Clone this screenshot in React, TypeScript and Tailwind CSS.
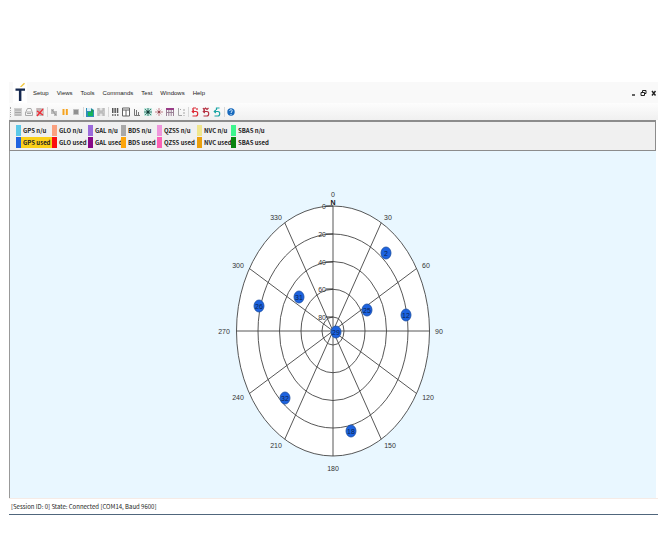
import React from "react";

const uiFont = "font-['Noto_Sans_CJK_SC','Liberation_Sans',sans-serif]";
const plotFont = "font-['Liberation_Sans',sans-serif]";

const menus = ["Setup", "Views", "Tools", "Commands", "Test", "Windows", "Help"];

const legend = [
  { name: "GPS", free: "bg-[#5bc8e8]", used: "bg-[#1f62e0]", width: "w-9", active: true },
  { name: "GLO", free: "bg-[#fba07e]", used: "bg-[#fb0d0d]", width: "w-9" },
  { name: "GAL", free: "bg-[#9b6bdb]", used: "bg-[#880a88]", width: "w-[33px]" },
  { name: "BDS", free: "bg-[#a8a8a8]", used: "bg-[#fda50a]", width: "w-9" },
  { name: "QZSS", free: "bg-[#ee96dc]", used: "bg-[#fb62b4]", width: "w-10" },
  { name: "NVC", free: "bg-[#f0e68c]", used: "bg-[#eaa00c]", width: "w-[34px]" },
  { name: "SBAS", free: "bg-[#3df58c]", used: "bg-[#0a840e]", width: "w-10" },
];

type Tool = { label: string; art: React.ReactNode };

const swirl = (color: string, top: React.ReactNode) => (
  <g fill="none" stroke={color} strokeWidth="1.2">
    {top}
    <path d="M1.5 4.500H5C7.300 4.500 7.300 9 4.800 9H1.500" />
    <path d="M2.800 3L1.300 4.500L2.800 6" />
  </g>
);

const groups: Tool[][] = [
  [
    { label: "Save", art: <g><path d="M0 1h8v8H0z" fill="#cfcfcf" /><path d="M1 3h6M1 5.500h6M1 8h6" stroke="#a5a5a5" /></g> },
    { label: "Open", art: <g fill="none" stroke="#aaa"><path d="M1 4.500L2.500 1.500H6L7 4.500M.5 5h7v3.500h-7zM2 6.500h4" /></g> },
    { label: "Disconnect", art: <g><path d="M0 1h8v8H0z" fill="#d5c4c4" /><path d="M1 2h4M1 4h3M4 8h3" stroke="#aaa" /><path d="M1 9L7 2M1 4l6 4" stroke="#ef2b35" strokeWidth="1.300" /></g> },
  ],
  [
    { label: "Record", art: <g><path d="M1 2h3v5H1zM4 4h3v5H4z" fill="#bcbcbc" /><path d="M2 3l4 5" stroke="#969696" /></g> },
    { label: "Pause", art: <path d="M1.500 2h2v6h-2zM4.800 2h2v6h-2z" fill="#f5a31f" /> },
    { label: "Stop", art: <path d="M1.500 2.500h5v5h-5z" fill="#8f8f8f" stroke="#c0c0c0" /> },
  ],
  [
    { label: "Load configuration", art: <g><path d="M0 1h5l3 2v7H0z" fill="#2f8db8" /><path d="M1 1h4v3H1z" fill="#d9eef7" /><path d="M2 5h5v4H2z" fill="#16b65a" /><path d="M5 2l3 2-3 2z" fill="#1d9b55" /></g> },
    { label: "Store configuration", art: <g><path d="M0 1h8v8H0z" fill="#c8c8c8" /><path d="M2 1v3h4V1M2 9V6h4v3" fill="#e5e5e5" stroke="#b0b0b0" /></g> },
  ],
  [
    { label: "Signal levels", art: <g><path d="M1 1h1.500v5H1zM3.400 1h1.500v5H3.400zM5.800 1h1.500v5H5.800z" fill="#555" /><path d="M1 8h6.500" stroke="#555" strokeWidth="1.500" strokeDasharray="1.500 1" /></g> },
    { label: "Position table", art: <g fill="#fff" stroke="#636363"><path d="M.5 1h7v8h-7zM.5 3h7M4 3v6" /></g> },
    { label: "Histogram", art: <g fill="none" stroke="#757575"><path d="M1.500 2v6.500H7M3.500 3v5M5.500 5v3" /></g> },
    { label: "Sky view", art: <g><path d="M0 1h8v8H0z" fill="#bfe8df" /><path d="M4 1v8M0 5h8M1 2l6 6M7 2L1 8" stroke="#246858" strokeWidth="0.8" /><circle cx="4" cy="5" r="1.500" fill="#143d39" /></g> },
    { label: "Scatter plot", art: <g stroke="#c08088" fill="none"><path d="M4 1v8M0 5h8" /><path d="M1.500 2.500l5 5M6.500 2.500l-5 5" strokeWidth="0.6" /><path d="M4 4v2" stroke="#842f39" strokeWidth="1.500" /></g> },
    { label: "Data table", art: <g><path d="M0 1h8v2H0z" fill="#993c87" /><path d="M.5 3v6M2.800 3v6M5.200 3v6M7.500 3v6M0 5.500h8" stroke="#9a8095" /></g> },
    { label: "Trajectory", art: <g fill="none" stroke="#a5a5a5"><path d="M1.500 1v7.500H5" /><path d="M7 2v7" strokeDasharray="2 1" /><path d="M3 2.500h2" strokeDasharray="1 1" /></g> },
  ],
  [
    { label: "Hot start", art: swirl("#dc2834", <path d="M2 1v2M6 1v2M2 1h3" />) },
    { label: "Warm start", art: swirl("#b53040", <path d="M1 1l1 1.500L3.500 1 5 2.500 6.500 1" />) },
    { label: "Cold start", art: swirl("#1aa5a5", <path d="M6.500 1H3.500v2" />) },
  ],
  [
    { label: "Help", art: <g><circle cx="4" cy="5" r="3.700" fill="#1769bd" /><path d="M2.700 4C2.700 2 5.500 2.300 5.200 4 5 5 4 4.900 4 6M4 7v1" fill="none" stroke="#d9efff" /></g> },
  ],
];

const rings = [
  { rx: 96.5, ry: 125 },
  { rx: 75, ry: 97 },
  { rx: 53.5, ry: 69.5 },
  { rx: 32, ry: 41.7 },
  { rx: 11, ry: 14 },
];

const elevations = [
  { text: "0", y: 26 },
  { text: "20", y: 54 },
  { text: "40", y: 82 },
  { text: "60", y: 109 },
  { text: "80", y: 137 },
];

const bearings = [
  { text: "0", x: 120, y: 17 },
  { text: "30", x: 175, y: 40 },
  { text: "60", x: 213, y: 88 },
  { text: "90", x: 226, y: 154 },
  { text: "120", x: 215, y: 220 },
  { text: "150", x: 177, y: 268 },
  { text: "180", x: 120, y: 291 },
  { text: "210", x: 63, y: 268 },
  { text: "240", x: 25, y: 220 },
  { text: "270", x: 11, y: 154 },
  { text: "300", x: 25, y: 88 },
  { text: "330", x: 63, y: 40 },
];

const satellites = [
  { id: "2", x: 173, y: 73 },
  { id: "25", x: 154, y: 130 },
  { id: "12", x: 193, y: 135 },
  { id: "29", x: 123, y: 152 },
  { id: "31", x: 86, y: 117 },
  { id: "26", x: 46, y: 126 },
  { id: "32", x: 72, y: 218 },
  { id: "18", x: 138, y: 251 },
];

function SkyPlot() {
  const spokes = [0, 30, 60, 90, 120, 150].map((deg) => {
    const a = (deg * Math.PI) / 180;
    return { deg, dx: 96.5 * Math.sin(a), dy: 125 * Math.cos(a) };
  });
  return (
    <svg width="240" height="300" viewBox="0 0 240 300" role="img" aria-label="Sky plot" className={`shrink-0 ${plotFont}`}>
      {rings.map((r) => (
        <ellipse key={r.rx} cx="120" cy="151" rx={r.rx} ry={r.ry} fill="#fff" stroke="#444" strokeWidth="0.9" />
      ))}
      {spokes.map((s) => (
        <line key={s.deg} x1={120 - s.dx} y1={151 + s.dy} x2={120 + s.dx} y2={151 - s.dy} stroke="#444" strokeWidth="0.9" />
      ))}
      {elevations.map((e) => (
        <g key={e.text}>
          <line x1="113" x2="120" y1={e.y} y2={e.y} stroke="#333" />
          <text x="113" y={e.y + 3} textAnchor="end" fontSize="7" fill="#333">{e.text}</text>
        </g>
      ))}
      {bearings.map((b) => (
        <text key={b.text} x={b.x} y={b.y} textAnchor="middle" fontSize="7" fill="#333">{b.text}</text>
      ))}
      <text x="120" y="25" textAnchor="middle" fontSize="7" fontWeight="700" fill="#111">N</text>
      {satellites.map((s) => (
        <g key={s.id}>
          <ellipse cx={s.x} cy={s.y} rx="5" ry="6" fill="#1d63e0" stroke="#174a9e" strokeWidth="0.8" />
          <text x={s.x} y={s.y + 3} textAnchor="middle" fontSize="7" fill="#0b2452">{s.id}</text>
        </g>
      ))}
    </svg>
  );
}

export default function App() {
  return (
    <div className={`min-h-screen bg-white pt-[82px] pr-2 pl-[9px] text-[#222] ${uiFont}`}>
      <header className="flex h-[21px] items-center bg-[#f9f9f9] pr-px pl-1">
        <svg width="14" height="21" viewBox="0 0 14 21" aria-label="Logo" role="img" className="bg-white">
          <path d="M2.500 6.500h9.500v2.300H8.400V19H5.900V8.800H2.500z" fill="#15284f" />
          <path d="M6.800 5L11 .8l1 .9L8.600 5z" fill="#f0c63c" />
        </svg>
        <nav className={`ml-[6px] flex gap-2 ${plotFont}`}>
          {menus.map((m) => (
            <button key={m} className="text-[6px] leading-[10px]">{m}</button>
          ))}
        </nav>
        <div className="ml-auto flex gap-[3px]">
          <button aria-label="Minimize">
            <svg width="7" height="8" viewBox="0 0 7 8"><path d="M2 6h3" stroke="#222" strokeWidth="1.400" /></svg>
          </button>
          <button aria-label="Restore">
            <svg width="7" height="8" viewBox="0 0 7 8"><path d="M2.500 3V1.500h3.500v3H5M1 3.500h3.500v3H1z" fill="none" stroke="#222" strokeWidth="1" /></svg>
          </button>
          <button aria-label="Close">
            <svg width="7" height="8" viewBox="0 0 7 8"><path d="M2 2l3.500 4.500M5.500 2L2 6.500" stroke="#222" strokeWidth="1.400" /></svg>
          </button>
        </div>
      </header>

      <div role="toolbar" className="flex h-[17px] items-center gap-[3px] bg-linear-to-b from-[#fdfdfd] to-[#f0f0f0] pl-px">
        <span className="h-[10px] border-l border-dotted border-[#aaa]" />
        {groups.map((group, i) => (
          <div key={i} className={i === 0 ? "flex gap-[3px]" : "flex gap-[3px] border-l border-[#d8d8d8] pl-0.5"}>
            {group.map((t) => (
              <button key={t.label} aria-label={t.label}>
                <svg width="8" height="10" viewBox="0 0 8 10" className="block">{t.art}</svg>
              </button>
            ))}
          </div>
        ))}
      </div>

      <section className="mr-0.5 flex border border-t-2 border-[#8c8c8c] bg-[#f0f0f0] pt-[3px] pb-0.5 pl-[6px] text-[6px] leading-[11px] font-bold text-[#222]">
        {legend.map((l) => (
          <div key={l.name} className={`shrink-0 whitespace-nowrap ${l.width}`}>
            <div className="flex h-[11px]">
              <span className={`w-[5px] shrink-0 ${l.free}`} />
              <span className="pl-0.5">{l.name} n/u</span>
            </div>
            <div className="mt-px flex h-[11px]">
              <span className={`w-[5px] shrink-0 ${l.used}`} />
              <span className={l.active ? "flex-1 bg-[#fbd01a] pl-0.5" : "pl-0.5"}>{l.name} used</span>
            </div>
          </div>
        ))}
      </section>

      <main className="mr-0.5 flex justify-center border-l border-[#999] bg-[#e9f7ff] pt-[29px] pb-[18px]">
        <SkyPlot />
      </main>

      <footer className="border-t border-b border-t-[#f5ebe6] border-b-[#50667c] pt-[3px] pb-[2px] pl-0.5 text-[6px] leading-[10px]">
        [Session ID: 0] State: Connected [COM14, Baud 9600]
      </footer>
    </div>
  );
}
